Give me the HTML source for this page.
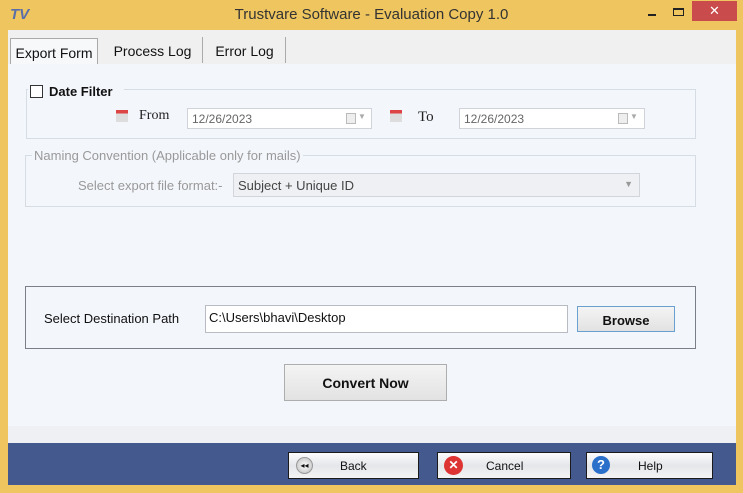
<!DOCTYPE html>
<html><head><style>
*{margin:0;padding:0;box-sizing:border-box}
body{width:743px;height:493px;background:#eec55f;font-family:"Liberation Sans",sans-serif;position:relative;overflow:hidden}
.abs{position:absolute}
.title{left:0;top:6px;width:743px;text-align:center;font-size:15px;color:#333}
.client{left:8px;top:30px;width:728px;height:455px;background:#f3f6fb}
.tabbar{left:8px;top:30px;width:728px;height:34px;background:#f0f0f0}
.tab{top:37px;height:26px;font-size:14px;color:#111;padding:6px 0 0 0;text-align:center}
.grp{border:1px solid #d6dce4}
.inp{background:#fff;border:1px solid #d0d4da;font-size:12px;color:#666;padding:3px 0 0 4px}
.btn{background:linear-gradient(#f4f4f4,#e2e2e2);border:1px solid #adadad;text-align:center;font-weight:bold;font-size:13px;color:#111}
.bb{background:linear-gradient(#fdfdfd,#e4e6ea 50%,#f4f4f4);border:1px solid #1a1a1a;font-size:12px;color:#111}
</style></head><body>
<div class="abs" style="left:10px;top:6px;font-size:15px;font-weight:bold;font-style:italic;color:#5a6fa8">TV</div>
<div class="abs title">Trustvare Software - Evaluation Copy 1.0</div>
<div class="abs" style="left:648px;top:14px;width:8px;height:2px;background:#222"></div>
<div class="abs" style="left:673px;top:8px;width:11px;height:8px;border:1px solid #222;border-top-width:2px"></div>
<div class="abs" style="left:692px;top:1px;width:45px;height:20px;background:#c94b4b;color:#fff;text-align:center;font-size:13px;line-height:19px">✕</div>
<div class="abs client"></div>
<div class="abs tabbar"></div>
<div class="abs tab" style="left:10px;width:88px;top:38px;background:#f7f8fa;border:1px solid #aaa;border-bottom:none">Export Form</div>
<div class="abs tab" style="left:103px;width:100px;border-right:1px solid #aaa">Process Log</div>
<div class="abs tab" style="left:204px;width:82px;border-right:1px solid #aaa">Error Log</div>

<div class="abs grp" style="left:26px;top:89px;width:670px;height:50px"></div>
<div class="abs" style="left:28px;top:83px;width:96px;height:14px;background:#f3f6fb"></div>
<div class="abs" style="left:30px;top:85px;width:13px;height:13px;border:1px solid #333;background:#fff"></div>
<div class="abs" style="left:49px;top:84px;font-size:13px;font-weight:bold;color:#111">Date Filter</div>
<div class="abs" style="left:116px;top:110px;width:12px;height:12px;background:linear-gradient(#d44 0 30%,#ddd 30%)"></div>
<div class="abs" style="left:139px;top:108px;font-family:'Liberation Serif',serif;font-size:14px;color:#222">From</div>
<div class="abs inp" style="left:187px;top:108px;width:185px;height:21px">12/26/2023</div>
<div class="abs" style="left:346px;top:113px;width:10px;height:11px;border:1px solid #bbb;background:#eee"></div>
<div class="abs" style="left:358px;top:112px;font-size:8px;color:#aaa">▼</div>
<div class="abs" style="left:390px;top:110px;width:12px;height:12px;background:linear-gradient(#d44 0 30%,#ddd 30%)"></div>
<div class="abs" style="left:418px;top:109px;font-family:'Liberation Serif',serif;font-size:15px;color:#222">To</div>
<div class="abs inp" style="left:459px;top:108px;width:186px;height:21px">12/26/2023</div>
<div class="abs" style="left:618px;top:113px;width:10px;height:11px;border:1px solid #bbb;background:#eee"></div>
<div class="abs" style="left:630px;top:112px;font-size:8px;color:#aaa">▼</div>

<div class="abs grp" style="left:25px;top:155px;width:671px;height:52px"></div>
<div class="abs" style="left:32px;top:148px;padding:0 2px;background:#f3f6fb;font-size:13px;color:#999">Naming Convention (Applicable only for mails)</div>
<div class="abs" style="left:78px;top:178px;font-size:13px;color:#999">Select export file format:-</div>
<div class="abs" style="left:233px;top:173px;width:407px;height:24px;background:#eef0f3;border:1px solid #d2d6dc;font-size:13px;color:#444;padding:4px 0 0 4px">Subject + Unique ID<span style="position:absolute;right:6px;top:5px;color:#999;font-size:9px">▼</span></div>

<div class="abs" style="left:25px;top:286px;width:671px;height:63px;border:1px solid #7a7f88"></div>
<div class="abs" style="left:44px;top:311px;font-size:13px;color:#111">Select Destination Path</div>
<div class="abs" style="left:205px;top:305px;width:363px;height:28px;background:#fff;border:1px solid #b8bcc2;font-size:13px;color:#111;padding:4px 0 0 3px">C:\Users\bhavi\Desktop</div>
<div class="abs btn" style="left:577px;top:306px;width:98px;height:26px;border-color:#6aa0cf;padding-top:6px">Browse</div>
<div class="abs btn" style="left:284px;top:364px;width:163px;height:37px;padding-top:10px;font-size:14px">Convert Now</div>

<div class="abs" style="left:8px;top:426px;width:728px;height:17px;background:#eef0f3"></div>
<div class="abs" style="left:8px;top:443px;width:728px;height:42px;background:#445a8f"></div>
<div class="abs bb" style="left:288px;top:452px;width:131px;height:27px">
 <div class="abs" style="left:7px;top:4px;width:17px;height:17px;border-radius:50%;background:radial-gradient(#fff,#bbb);border:1px solid #999;font-size:8px;text-align:center;line-height:15px">◂◂</div>
 <div class="abs" style="left:51px;top:6px">Back</div></div>
<div class="abs bb" style="left:437px;top:452px;width:134px;height:27px">
 <div class="abs" style="left:6px;top:3px;width:19px;height:19px;border-radius:50%;background:#d33;color:#fff;font-size:12px;font-weight:bold;text-align:center;line-height:19px">✕</div>
 <div class="abs" style="left:48px;top:6px">Cancel</div></div>
<div class="abs bb" style="left:586px;top:452px;width:127px;height:27px">
 <div class="abs" style="left:5px;top:3px;width:18px;height:18px;border-radius:50%;background:#2a6fc9;color:#fff;font-size:13px;font-weight:bold;text-align:center;line-height:18px">?</div>
 <div class="abs" style="left:51px;top:6px">Help</div></div>
</body></html>
